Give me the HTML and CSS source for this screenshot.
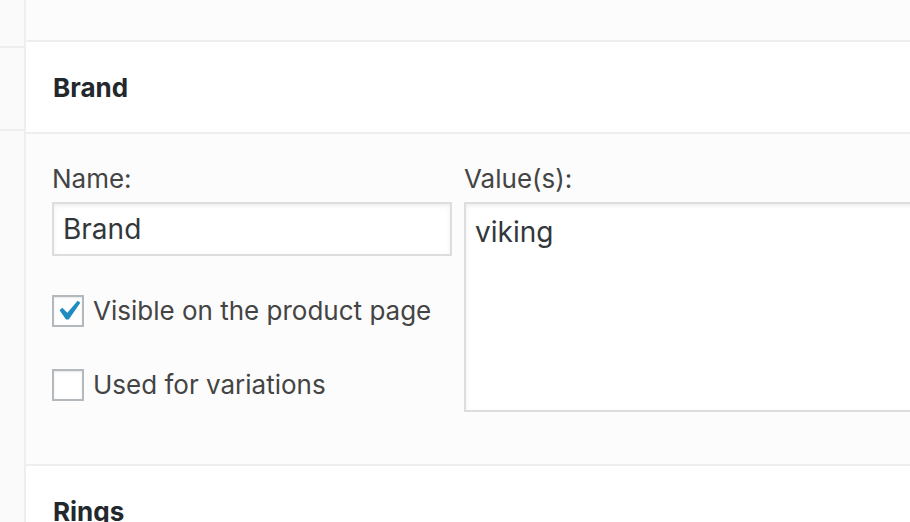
FILE: index.html
```html
<!DOCTYPE html>
<html lang="en">
<head>
  <meta charset="UTF-8">
  <title>Product attributes</title>
  <link rel="stylesheet" href="styles.css">
</head>
<body>

<div class="panel">

  <!-- product data tabs (cut off on the left) -->
  <ul class="tabs">
    <li class="tab tab-first"></li>
    <li class="tab"></li>
    <li class="tab tab-rest"></li>
  </ul>

  <div class="attributes">
    <div class="toolbar"></div>

    <!-- Brand attribute -->
    <div class="attr">
      <div class="attr-head">
        <h3>Brand</h3>
      </div>
      <div class="attr-body">
        <div class="attr-col">
          <label class="field-label">Name:</label>
          <input class="text-input" type="text" value="Brand">
          <label class="check-row">
            <span class="checkbox checked">
              <svg viewBox="0 0 20 20" width="40" height="40"><path d="M14.83 4.89l1.34.94-5.81 8.38H9.02L5.78 9.67l1.34-1.25 2.57 2.4z" fill="#1e8cbe"/></svg>
            </span>
            Visible on the product page
          </label>
          <label class="check-row">
            <span class="checkbox"></span>
            Used for variations
          </label>
        </div>
        <div class="attr-col attr-col-wide">
          <label class="field-label">Value(s):</label>
          <textarea class="text-area">viking</textarea>
        </div>
      </div>
    </div>

    <!-- Rings attribute -->
    <div class="attr">
      <div class="attr-head">
        <h3>Rings</h3>
      </div>
    </div>
  </div>

</div>

</body>
</html>
```

FILE: styles.css
```css
body {
  margin: 0;
  font-family: Inter, "Noto Sans", sans-serif;
  background-color: #fcfcfc;
  overflow: hidden;
}

.panel {
  display: flex;
  height: 522px;
}

.tabs {
  list-style: none;
  margin: 0;
  padding: 0;
  width: 24px;
  flex-shrink: 0;
  background-color: #fafafa;
  border-right: 2px solid #eee;
}

.tab {
  height: 81px;
  border-bottom: 2px solid #eee;
}

.tab-first {
  height: 46px;
}

.tab-rest {
  border-bottom: none;
}

.attributes {
  flex: 1;
  min-width: 0;
}

.toolbar {
  height: 40px;
  background-color: #fcfcfc;
  border-bottom: 2px solid #eee;
  border-bottom-left-radius: 2px;
}

.attr-head {
  height: 90px;
  background-color: #fff;
  display: flex;
  align-items: center;
  padding-left: 27px;
}

.attr-head h3 {
  margin: 0;
  font-size: 26px;
  font-weight: 700;
  color: #23282d;
}

.attr-body {
  display: flex;
  gap: 12px;
  padding: 26px 0 52px 26px;
  background-color: #fcfcfc;
  border-top: 2px solid #eee;
  border-bottom: 2px solid #eee;
}

.attr-col {
  width: 400px;
  flex-shrink: 0;
}

.attr-col-wide {
  width: auto;
  flex: 1;
  margin-right: -20px;
}

.field-label {
  display: block;
  font-size: 26px;
  line-height: 38px;
  margin-bottom: 4px;
  color: #444;
}

.text-input,
.text-area {
  display: block;
  box-sizing: border-box;
  width: 100%;
  margin: 0;
  font-family: inherit;
  font-size: 28px;
  color: #32373c;
  background-color: #fff;
  border: 2px solid #ddd;
  box-shadow: inset 0 2px 4px rgba(0, 0, 0, 0.07);
  outline: none;
}

.text-input {
  height: 54px;
  padding: 0 9px;
}

.text-area {
  height: 210px;
  padding: 8px 9px;
  resize: none;
  line-height: 40px;
}

.check-row {
  display: flex;
  align-items: center;
  gap: 9px;
  margin-top: 39px;
  font-size: 26px;
  line-height: 32px;
  color: #444;
}

.check-row + .check-row {
  margin-top: 42px;
}

.checkbox {
  box-sizing: border-box;
  width: 32px;
  height: 32px;
  display: flex;
  align-items: center;
  justify-content: center;
  overflow: visible;
  background-color: #fff;
  border: 2px solid #b4b9be;
  box-shadow: inset 0 1px 2px rgba(0, 0, 0, 0.1);
}

.checkbox svg {
  flex-shrink: 0;
  margin: -4px;
}
```
